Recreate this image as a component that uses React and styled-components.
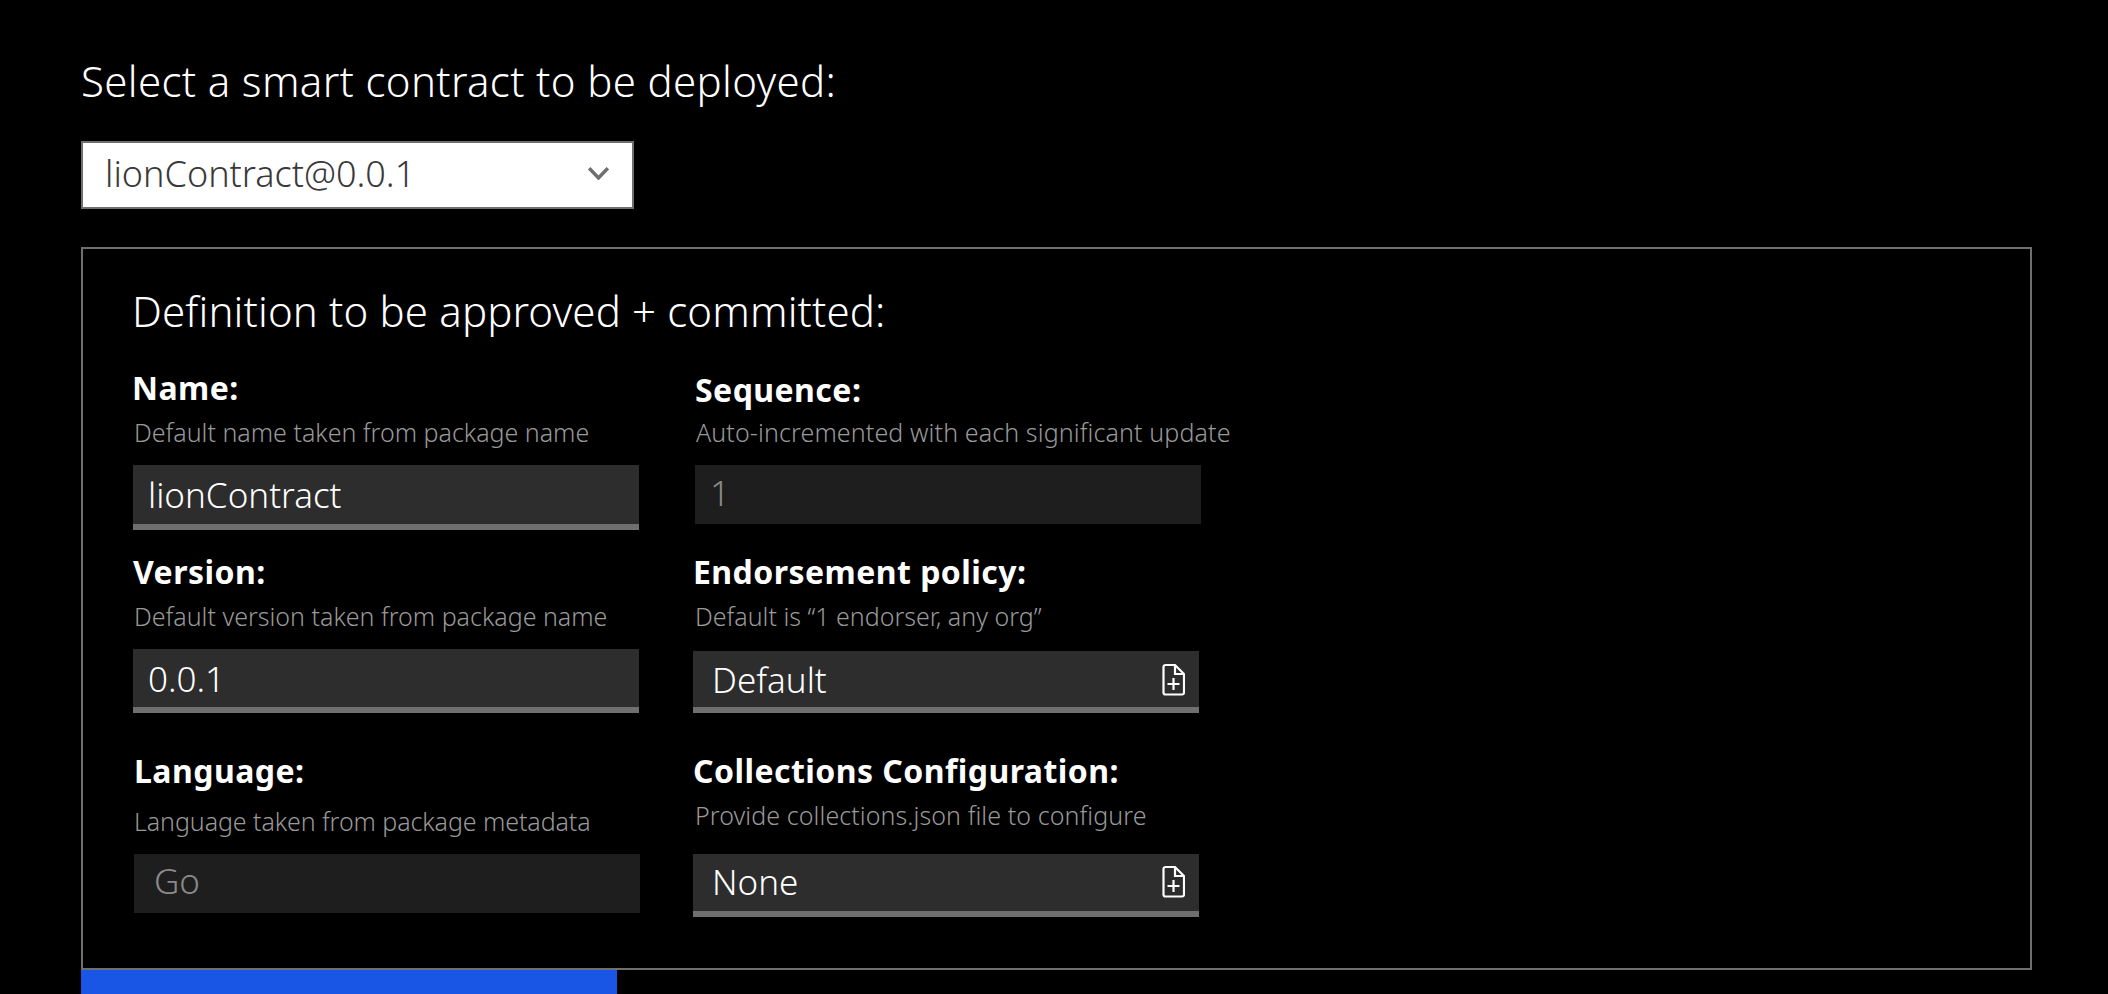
import React from 'react';
import styled, { createGlobalStyle } from 'styled-components';

const GlobalStyle = createGlobalStyle`
  html, body {
    margin: 0;
    height: 994px;
    overflow: hidden;
    background: #000;
    font-family: "Noto Sans", "Open Sans", "Liberation Sans", sans-serif;
  }
`;

const Page = styled.div`
  padding: 59px 0 0 81px;
  box-sizing: border-box;
  height: 994px;
  overflow: hidden;
  color: #fff;
`;

const Heading = styled.h2`
  margin: 0 0 0 ${(p) => p.$left || 0}px;
  font-size: 42px;
  line-height: 44px;
  font-weight: 300;
  letter-spacing: ${(p) => p.$spacing}px;
`;

const Dropdown = styled.div`
  margin-top: 38px;
  width: 553px;
  height: 68px;
  box-sizing: border-box;
  border: 2px solid #6f6f6f;
  background: #fff;
  color: #393939;
  display: flex;
  align-items: center;
  justify-content: space-between;
  padding: 0 23px 3px 22px;
  font-size: 36px;
  font-weight: 300;
`;

const Panel = styled.section`
  margin-top: 38px;
  width: 1951px;
  height: 723px;
  box-sizing: border-box;
  border: 2px solid #6f6f6f;
  padding: 40px 0 0 50px;
`;

const FieldGrid = styled.div`
  display: grid;
  grid-template-columns: 561px 510px;
  margin-top: 35px;
`;

const Column = styled.div`
  display: flex;
  flex-direction: column;
`;

const Field = styled.div`
  display: flex;
  flex-direction: column;
  height: ${(p) => p.$height}px;
  margin-left: ${(p) => p.$indent || 0}px;
`;

const Label = styled.label`
  font-size: 32px;
  line-height: 40px;
  font-weight: 700;
  letter-spacing: 0.45px;
  margin-top: ${(p) => p.$top || 0}px;
  margin-left: ${(p) => p.$left || 0}px;
`;

const Hint = styled.div`
  font-size: 25px;
  line-height: 30px;
  font-weight: 300;
  color: #999;
  white-space: nowrap;
  letter-spacing: ${(p) => p.$spacing || 0}px;
  margin-top: ${(p) => p.$top || 0}px;
  margin-left: ${(p) => p.$left || 0}px;
`;

const Input = styled.div`
  width: 506px;
  height: ${(p) => p.$height}px;
  box-sizing: border-box;
  margin-top: ${(p) => p.$top || 0}px;
  background: ${(p) => (p.$disabled ? '#1e1e1e' : '#2d2d2d')};
  color: ${(p) => (p.$disabled ? '#8a8a8a' : '#fff')};
  border-bottom: ${(p) => (p.$disabled ? 'none' : '6px solid #6f6f6f')};
  display: flex;
  align-items: center;
  justify-content: space-between;
  padding: 0 14px ${(p) => p.$lift || 0}px ${(p) => p.$pad || 15}px;
  font-size: 35px;
  font-weight: 300;
`;

const Bar = styled.div`
  width: 536px;
  height: 26px;
  background: #1a56e6;
`;

const Chevron = () => (
  <svg width="21" height="13" viewBox="0 0 21 13" fill="none" stroke="#6f6f6f" strokeWidth="3.4">
    <path d="M1.2 1.2 L10.5 11 L19.8 1.2" />
  </svg>
);

const FileAdd = () => (
  <svg width="23" height="33" viewBox="0 0 23 33" fill="none" stroke="#fff" strokeWidth="2.2">
    <path d="M3.5 2 H13 L22 11 V29.5 a2 2 0 0 1 -2 2 H3.5 a2 2 0 0 1 -2 -2 V4 a2 2 0 0 1 2 -2 Z" />
    <path d="M13 2 V11 H22" />
    <path d="M11.5 15 V27 M5.5 21 H17.5" />
  </svg>
);

export default function App() {
  return (
    <>
      <GlobalStyle />
      <Page>
        <Heading $spacing={0.35}>Select a smart contract to be deployed:</Heading>
        <Dropdown>
          lionContract@0.0.1
          <Chevron />
        </Dropdown>
        <Panel>
          <Heading $left={-1} $spacing={0.15}>Definition to be approved + committed:</Heading>
          <FieldGrid>
            <Column>
              <Field $height={184}>
                <Label $left={-1}>Name:</Label>
                <Hint $left={1} $top={9}>Default name taken from package name</Hint>
                <Input $height={65} $top={18}>lionContract</Input>
              </Field>
              <Field $height={199}>
                <Label>Version:</Label>
                <Hint $left={1} $top={9}>Default version taken from package name</Hint>
                <Input $height={64} $top={18}>0.0.1</Input>
              </Field>
              <Field $height={190} $indent={1}>
                <Label>Language:</Label>
                <Hint $top={15} $spacing={-0.08}>Language taken from package metadata</Hint>
                <Input $disabled $height={59} $top={18} $pad={20} $lift={6}>Go</Input>
              </Field>
            </Column>
            <Column>
              <Field $height={184} $indent={1}>
                <Label $top={2}>Sequence:</Label>
                <Hint $left={1} $top={7} $spacing={0.12}>Auto-incremented with each significant update</Hint>
                <Input $disabled $height={59} $top={18} $lift={4}>1</Input>
              </Field>
              <Field $height={199} $indent={-1}>
                <Label>Endorsement policy:</Label>
                <Hint $left={2} $top={9}>Default is “1 endorser, any org”</Hint>
                <Input $height={62} $top={20} $pad={19}>
                  Default
                  <FileAdd />
                </Input>
              </Field>
              <Field $height={190} $indent={-1}>
                <Label>Collections Configuration:</Label>
                <Hint $left={2} $top={9} $spacing={0.08}>Provide collections.json file to configure</Hint>
                <Input $height={63} $top={24} $pad={19} $lift={2}>
                  None
                  <FileAdd />
                </Input>
              </Field>
            </Column>
          </FieldGrid>
        </Panel>
        <Bar />
      </Page>
    </>
  );
}
